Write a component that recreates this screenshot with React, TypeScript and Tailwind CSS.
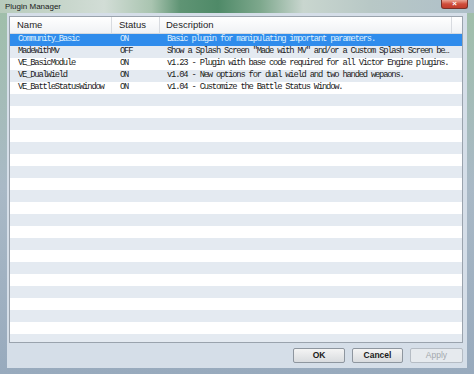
const PLUGINS = [
  { name: "Community_Basic", status: "ON", desc: "Basic plugin for manipulating important parameters." },
  { name: "MadeWithMv", status: "OFF", desc: 'Show a Splash Screen "Made with MV" and/or a Custom Splash Screen be…' },
  { name: "VE_BasicModule", status: "ON", desc: "v1.23 - Plugin with base code required for all Victor Engine plugins." },
  { name: "VE_DualWield", status: "ON", desc: "v1.04 - New options for dual wield and two handed wepaons." },
  { name: "VE_BattleStatusWindow", status: "ON", desc: "v1.04 - Customize the Battle Status Window." },
];

const TOTAL_ROWS = 26;

function Row({ index, selected }: { index: number; selected: boolean }) {
  const p = PLUGINS[index];
  const bg = selected ? "bg-[#2f8cec] text-[#dcefff]" : index % 2 === 1 ? "bg-[#e4eaf1] text-[#1c1c1c]" : "bg-white text-[#1c1c1c]";
  return (
    <div className={`flex h-[12px] shrink-0 items-center ${bg}`}>
      <div className="w-[102px] shrink-0 truncate pl-[8px]">{p?.name}</div>
      <div className="w-[48px] shrink-0 pl-[8px]">{p?.status}</div>
      <div className="min-w-0 flex-1 truncate pl-[7px]">{p?.desc}</div>
    </div>
  );
}

export default function App() {
  const rows = Array.from({ length: TOTAL_ROWS }, (_, i) => i);
  return (
    <div className="relative flex h-[374px] w-[474px] flex-col overflow-hidden bg-gradient-to-b from-[#9fbfa8] via-[#a9b9c6] to-[#98aabd] font-['Liberation_Sans',sans-serif]">
      {/* title bar */}
      <div className="flex h-[13px] shrink-0 items-center bg-[linear-gradient(90deg,#b7cbbb_0%,#d2ddd6_22%,#a9c4b0_32%,#5f9474_38%,#4f8a68_46%,#7ea88d_55%,#c9d6cf_64%,#b8c8c6_78%,#aebfc9_100%)] pl-[5px]">
        <span className="text-[8px] leading-none text-[#1a1a1a]">Plugin Manager</span>
      </div>
      <div className="absolute right-[6px] top-0 flex h-[9px] w-[27px] items-center justify-center rounded-b-[3px] border border-t-0 border-[#7a3028] bg-gradient-to-b from-[#e9a495] via-[#cf4c3a] to-[#c13d2c]">
        <span className="text-[8px] font-bold leading-none text-white">×</span>
      </div>

      {/* client area */}
      <div className="mx-[7px] flex min-h-0 flex-1 flex-col bg-[#d5dee8] pt-[3px]">
        <div className="ml-[2px] mr-[4px] flex min-h-0 flex-1 flex-col overflow-hidden border border-[#9aa3ad] bg-white">
          {/* header */}
          <div className="flex h-[17px] shrink-0 border-b border-[#d5dae0] bg-gradient-to-b from-white to-[#f0f2f5] text-[9.5px] text-[#1e1e1e]">
            <div className="flex w-[102px] shrink-0 items-center border-r border-[#d8dbe0] pl-[7px]">Name</div>
            <div className="flex w-[48px] shrink-0 items-center border-r border-[#d8dbe0] pl-[7px]">Status</div>
            <div className="flex flex-1 items-center border-r border-[#d8dbe0] pl-[6px]">Description</div>
            <div className="w-[10px] shrink-0" />
          </div>
          {/* rows */}
          <div className="flex min-h-0 flex-1 flex-col overflow-hidden font-['Liberation_Mono',monospace] text-[8.8px] tracking-[-1.2px]">
            {rows.map((i) => (
              <Row key={i} index={i} selected={i === 0} />
            ))}
          </div>
        </div>

        {/* buttons */}
        <div className="flex h-[25px] shrink-0 items-center justify-end gap-[7px] pr-[4px] text-[8.5px]">
          <button className="h-[15px] w-[52px] rounded-[2px] border border-[#8e969f] bg-gradient-to-b from-[#f4f4f4] to-[#d9dcdf] font-semibold text-[#1a1a1a]">OK</button>
          <button className="h-[15px] w-[51px] rounded-[2px] border border-[#8e969f] bg-gradient-to-b from-[#f4f4f4] to-[#d9dcdf] font-semibold text-[#1a1a1a]">Cancel</button>
          <button className="h-[15px] w-[53px] rounded-[2px] border border-[#b5bcc4] bg-[#e6eaee] text-[#a3a8ad]">Apply</button>
        </div>
      </div>
      <div className="h-[6px] shrink-0" />
    </div>
  );
}
